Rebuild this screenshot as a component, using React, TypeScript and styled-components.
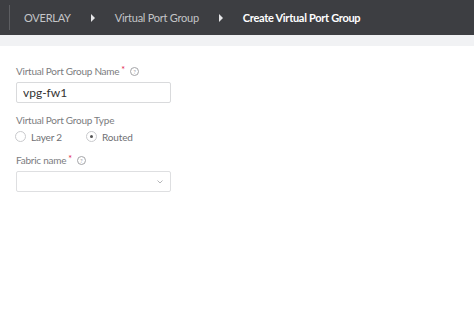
import styled, { createGlobalStyle } from 'styled-components';

const GlobalStyle = createGlobalStyle`
  html, body {
    margin: 0;
    padding: 0;
    background: #fff;
    font-family: Lato, "Liberation Sans", sans-serif;
  }
`;

const Page = styled.div`
  width: 474px;
  height: 323px;
  overflow: hidden;
  background: #fff;
`;

const Header = styled.header`
  height: 35px;
  background: #3d3e42;
  display: flex;
  align-items: center;
  padding-left: 9px;
`;

const Divider = styled.span`
  width: 1px;
  height: 25px;
  background: #5d5e62;
  margin-right: 14px;
`;

const Crumb = styled.span<{ $current?: boolean }>`
  font-size: 11px;
  letter-spacing: ${(p) => (p.$current ? '-0.3px' : '-0.25px')};
  color: ${(p) => (p.$current ? '#ffffff' : '#c4c5c8')};
  font-weight: ${(p) => (p.$current ? 700 : 400)};
  white-space: nowrap;
`;

const Caret = styled.span`
  width: 0;
  height: 0;
  border-top: 4px solid transparent;
  border-bottom: 4px solid transparent;
  border-left: 4px solid #e6e6e8;
  margin: 0 20px;
`;

const SubBar = styled.div`
  height: 11px;
  background: #f1f2f4;
`;

const Form = styled.form`
  display: flex;
  flex-direction: column;
  padding: 18px 15px 0 16px;
  width: 155px;
`;

const Field = styled.div`
  display: flex;
  flex-direction: column;
  margin-bottom: 10px;
`;

const Label = styled.label<{ $gap?: number }>`
  font-size: 10px;
  letter-spacing: -0.25px;
  color: #7b7c80;
  display: flex;
  align-items: center;
  height: 14px;
  margin-bottom: ${(p) => p.$gap ?? 4}px;
`;

const Required = styled.span`
  color: #e0184f;
  font-size: 9px;
  margin-left: 2px;
  align-self: flex-start;
`;

const Help = styled.span`
  box-sizing: border-box;
  width: 9px;
  height: 9px;
  border: 1px solid #a3a4a7;
  border-radius: 50%;
  font-size: 6px;
  line-height: 7px;
  text-align: center;
  color: #a3a4a7;
  margin-left: 5px;
`;

const Input = styled.input`
  box-sizing: border-box;
  width: 155px;
  height: 21px;
  border: 1px solid #d9dadc;
  border-radius: 2px;
  padding: 0 6px;
  font-family: inherit;
  font-size: 12px;
  color: #333;
  outline: none;
`;

const Select = styled.div`
  box-sizing: border-box;
  width: 155px;
  height: 21px;
  border: 1px solid #dedfe1;
  border-radius: 2px;
  display: flex;
  align-items: center;
  justify-content: flex-end;
  padding-right: 7px;
`;

const RadioRow = styled.div`
  display: flex;
  align-items: center;
  gap: 25px;
  height: 13px;
`;

const RadioOption = styled.label`
  display: flex;
  align-items: center;
  gap: 5px;
  font-size: 10px;
  letter-spacing: -0.15px;
  color: #6f7074;
`;

const RadioDot = styled.span<{ $checked?: boolean }>`
  box-sizing: border-box;
  width: 11px;
  height: 11px;
  border: 1px solid #c9cacd;
  border-radius: 50%;
  display: flex;
  align-items: center;
  justify-content: center;
  margin-left: -1px;
  &::after {
    content: '';
    width: 3px;
    height: 3px;
    border-radius: 50%;
    background: ${(p) => (p.$checked ? '#555' : 'transparent')};
  }
`;

export default function App() {
  return (
    <Page>
      <GlobalStyle />
      <Header>
        <Divider />
        <Crumb>OVERLAY</Crumb>
        <Caret />
        <Crumb>Virtual Port Group</Crumb>
        <Caret />
        <Crumb $current>Create Virtual Port Group</Crumb>
      </Header>
      <SubBar />
      <Form>
        <Field>
          <Label>
            Virtual Port Group Name<Required>*</Required>
            <Help>?</Help>
          </Label>
          <Input defaultValue="vpg-fw1" />
        </Field>
        <Field>
          <Label $gap={3}>Virtual Port Group Type</Label>
          <RadioRow>
            <RadioOption>
              <RadioDot />
              Layer 2
            </RadioOption>
            <RadioOption>
              <RadioDot $checked />
              Routed
            </RadioOption>
          </RadioRow>
        </Field>
        <Field>
          <Label>
            Fabric name<Required>*</Required>
            <Help>?</Help>
          </Label>
          <Select>
            <svg width="6" height="4" viewBox="0 0 6 4">
              <path d="M0.5 0.5 L3 3 L5.5 0.5" fill="none" stroke="#b5b6b9" strokeWidth="1" />
            </svg>
          </Select>
        </Field>
      </Form>
    </Page>
  );
}
